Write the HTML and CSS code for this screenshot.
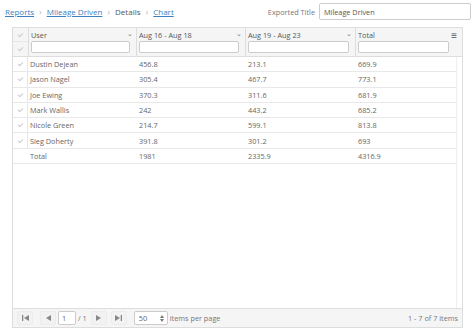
FILE: index.html
```html
<!DOCTYPE html>
<html lang="en">

<head>
    <meta charset="UTF-8">
    <meta name="viewport" content="width=device-width, initial-scale=1.0">
    <title>Mileage Driven - Details</title>
    <link rel="stylesheet" href="styles.css">
</head>

<body>
    <div class="top-bar">
        <div class="breadcrumb">
            <a href="#">Reports</a>
            <span class="crumb-sep">&rsaquo;</span>
            <a href="#">Mileage Driven</a>
            <span class="crumb-sep">&rsaquo;</span>
            <span class="crumb-current">Details</span>
            <span class="crumb-sep">&rsaquo;</span>
            <a href="#">Chart</a>
        </div>
        <div class="export-title">
            <label for="exportTitle">Exported Title</label>
            <input id="exportTitle" type="text" value="Mileage Driven">
        </div>
    </div>

    <div class="grid">
        <div class="grid-header">
            <div class="head-row">
                <div class="check-cell head-check"><span class="tick"></span></div>
                <div class="head-cell"><span>User</span><span class="chev">&#8964;</span></div>
                <div class="head-cell"><span>Aug 16 - Aug 18</span><span class="chev">&#8964;</span></div>
                <div class="head-cell"><span>Aug 19 - Aug 23</span><span class="chev">&#8964;</span></div>
                <div class="head-cell"><span>Total</span><span class="menu">&#8801;</span></div>
            </div>
            <div class="filter-row">
                <div class="check-cell head-check"><span class="tick"></span></div>
                <div class="filter-cell"><input type="text"></div>
                <div class="filter-cell"><input type="text"></div>
                <div class="filter-cell"><input type="text"></div>
                <div class="filter-cell total-filter"><input type="text"></div>
            </div>
        </div>

        <div class="grid-body">
            <div class="rows">
                <div class="row"><div class="check-cell"><span class="tick"></span></div><div class="cell">Dustin Dejean</div><div class="cell">456.8</div><div class="cell">213.1</div><div class="cell">669.9</div></div>
                <div class="row"><div class="check-cell"><span class="tick"></span></div><div class="cell">Jason Nagel</div><div class="cell">305.4</div><div class="cell">467.7</div><div class="cell">773.1</div></div>
                <div class="row"><div class="check-cell"><span class="tick"></span></div><div class="cell">Joe Ewing</div><div class="cell">370.3</div><div class="cell">311.6</div><div class="cell">681.9</div></div>
                <div class="row"><div class="check-cell"><span class="tick"></span></div><div class="cell">Mark Wallis</div><div class="cell">242</div><div class="cell">443.2</div><div class="cell">685.2</div></div>
                <div class="row"><div class="check-cell"><span class="tick"></span></div><div class="cell">Nicole Green</div><div class="cell">214.7</div><div class="cell">599.1</div><div class="cell">813.8</div></div>
                <div class="row"><div class="check-cell"><span class="tick"></span></div><div class="cell">Sieg Doherty</div><div class="cell">391.8</div><div class="cell">301.2</div><div class="cell">693</div></div>
                <div class="row total-row"><div class="check-cell"></div><div class="cell">Total</div><div class="cell">1981</div><div class="cell">2335.9</div><div class="cell">4316.9</div></div>
            </div>
            <div class="gutter"></div>
        </div>

        <div class="pager">
            <div class="pager-left">
                <button class="pager-btn">
                    <svg width="7" height="6" viewBox="0 0 7 6"><rect x="0" y="0" width="1.3" height="6" fill="#888"/><polygon points="7,0 7,6 2,3" fill="#888"/></svg>
                </button>
                <button class="pager-btn">
                    <svg width="5" height="6" viewBox="0 0 5 6"><polygon points="5,0 5,6 0,3" fill="#888"/></svg>
                </button>
                <input class="page-input" type="text" value="1">
                <span class="page-of">/ 1</span>
                <button class="pager-btn">
                    <svg width="5" height="6" viewBox="0 0 5 6"><polygon points="0,0 0,6 5,3" fill="#888"/></svg>
                </button>
                <button class="pager-btn">
                    <svg width="7" height="6" viewBox="0 0 7 6"><polygon points="0,0 0,6 5,3" fill="#888"/><rect x="5.7" y="0" width="1.3" height="6" fill="#888"/></svg>
                </button>
                <div class="page-size">
                    <span>50</span>
                    <svg width="4" height="7" viewBox="0 0 4 7"><polygon points="0,3 4,3 2,0" fill="#777"/><polygon points="0,4 4,4 2,7" fill="#777"/></svg>
                </div>
                <span class="page-label">items per page</span>
            </div>
            <div class="pager-info">1 - 7 of 7 items</div>
        </div>
    </div>
</body>

</html>
```

FILE: styles.css
```css
body {
    margin: 0;
    font-family: "Open Sans", "Liberation Sans", sans-serif;
    background-color: #fff;
    color: #666;
}

.top-bar {
    display: flex;
    justify-content: space-between;
    align-items: center;
    height: 23px;
    padding: 0 3px 0 5px;
}

.breadcrumb {
    font-size: 8px;
    display: flex;
    align-items: center;
    gap: 4px;
}

.breadcrumb a {
    color: #3d7fc1;
}

.crumb-sep {
    color: #bbb;
    font-size: 9px;
    padding: 0 1px;
}

.crumb-current {
    color: #555;
}

.export-title {
    display: flex;
    align-items: center;
    gap: 4px;
    font-size: 7.3px;
}

.export-title label {
    color: #777;
}

.export-title input {
    width: 152px;
    height: 17px;
    box-sizing: border-box;
    border: 1px solid #ccc;
    border-radius: 2px;
    padding: 0 4px;
    font-family: inherit;
    font-size: 7.3px;
    color: #555;
}

.grid {
    margin: 4px 0 0 12px;
    width: 451px;
    height: 301px;
    box-sizing: border-box;
    border: 1px solid #ddd;
    display: flex;
    flex-direction: column;
    font-size: 7.3px;
}

.grid-header {
    background-color: #f5f5f5;
    border-bottom: 1px solid #ddd;
}

.head-row,
.filter-row {
    display: grid;
    grid-template-columns: 15px 108px 109px 110px 1fr;
}

.head-row {
    height: 13px;
}

.filter-row {
    height: 15px;
}

.head-cell {
    border-left: 1px solid #ddd;
    display: flex;
    justify-content: space-between;
    align-items: center;
    padding: 0 3px 0 2px;
    color: #555;
}

.chev {
    font-size: 7px;
    color: #777;
    line-height: 1;
    margin-top: -4px;
}

.menu {
    font-size: 10px;
    color: #555;
    margin-right: 2px;
}

.filter-cell {
    border-left: 1px solid #ddd;
    padding: 0 6px 0 2px;
    display: flex;
    align-items: flex-start;
}

.total-filter {
    padding-right: 13px;
}

.filter-cell input {
    width: 100%;
    height: 12px;
    box-sizing: border-box;
    border: 1px solid #ccc;
    border-radius: 2px;
    background-color: #fff;
    margin: 0;
}

.check-cell {
    display: flex;
    align-items: center;
    justify-content: center;
    border-right: 1px solid #e6e6e6;
}

.head-check {
    border-right: none;
}

.head-row .head-check {
    border-bottom: 1px solid #e6e6e6;
}

.tick {
    width: 4px;
    height: 2px;
    border-left: 1px solid #ccc;
    border-bottom: 1px solid #ccc;
    transform: rotate(-45deg);
    margin-top: -1px;
}

.grid-body {
    flex: 1;
    display: flex;
}

.rows {
    width: 443px;
}

.gutter {
    flex: 1;
    border-left: 1px solid #eee;
}

.row {
    display: grid;
    grid-template-columns: 15px 108px 109px 110px 101px;
    height: 15.3px;
    box-sizing: border-box;
    border-bottom: 1px solid #e8e8e8;
}

.cell {
    display: flex;
    align-items: center;
    padding-left: 2px;
    color: #666;
}

.row .cell:nth-child(3),
.row .cell:nth-child(4),
.row .cell:nth-child(5) {
    padding-left: 3px;
}

.total-row .check-cell {
    border-right: none;
}

.pager {
    height: 19px;
    box-sizing: border-box;
    background-color: #f5f5f5;
    border-top: 1px solid #ddd;
    display: flex;
    justify-content: space-between;
    align-items: center;
    padding: 0 4px 0 4px;
}

.pager-left {
    display: flex;
    align-items: center;
}

.pager-btn {
    width: 16px;
    height: 14px;
    padding: 0;
    border: 1px solid #ececec;
    border-radius: 2px;
    background-color: #f2f2f2;
    display: flex;
    align-items: center;
    justify-content: center;
    margin-right: 4px;
}

.pager-btn:first-child {
    margin-right: 7px;
}

.page-input {
    width: 18px;
    height: 14px;
    box-sizing: border-box;
    border: 1px solid #ccc;
    border-radius: 2px;
    padding: 0 0 0 3px;
    font-family: inherit;
    font-size: 7.3px;
    color: #666;
    margin-left: -2px;
}

.page-of {
    margin: 0 4px 0 2px;
    color: #777;
}

.page-size {
    width: 34px;
    height: 14px;
    box-sizing: border-box;
    border: 1px solid #ccc;
    border-radius: 2px;
    background-color: #fff;
    display: flex;
    justify-content: space-between;
    align-items: center;
    padding: 0 3px 0 4px;
    margin-left: 3px;
    color: #666;
}

.page-label {
    margin-left: 2px;
    color: #777;
}

.pager-info {
    color: #777;
}
```
